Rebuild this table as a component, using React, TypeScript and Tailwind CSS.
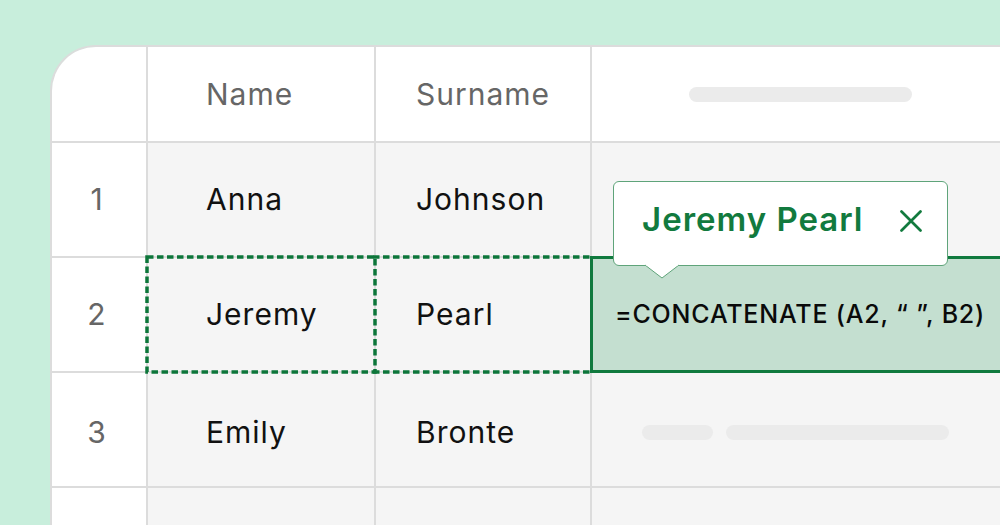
const rows = [
  { n: '1', name: 'Anna', surname: 'Johnson' },
  { n: '2', name: 'Jeremy', surname: 'Pearl' },
  { n: '3', name: 'Emily', surname: 'Bronte' },
  { n: '', name: '', surname: '' },
]

const dash = {
  fill: 'none',
  stroke: '#0d763a',
  strokeWidth: 3.5,
  strokeDasharray: '6.5 3.5',
}

// selection frame, the second cell leaves out its left edge
const DashedFrame = ({ open }: { open?: boolean }) => (
  <div className="pointer-events-none absolute -inset-[3px] z-10">
    <svg className="h-full w-full overflow-visible">
      {open ? (
        <>
          <line x1="0" y1="2" x2="100%" y2="2" {...dash} />
          <g transform="translate(0 -2)">
            <line x1="0" y1="100%" x2="100%" y2="100%" {...dash} />
          </g>
        </>
      ) : (
        <rect
          x="2"
          y="2"
          style={{ width: 'calc(100% - 4px)', height: 'calc(100% - 4px)' }}
          {...dash}
        />
      )}
    </svg>
  </div>
)

const Tooltip = () => (
  <div className="absolute left-[21px] top-[-77px] z-20 flex h-[85px] w-[335px] items-center justify-between rounded-[6px] border border-[#5fa47a] bg-white pb-[8px] pl-[28px] pr-[25px]">
    <span className="text-[33px] font-semibold tracking-[1px] text-[#127a3e]">
      Jeremy Pearl
    </span>
    <svg width="22" height="22" viewBox="0 0 22 22" className="mt-[2px]">
      <path
        d="M1.5 1.5 L20.5 20.5 M20.5 1.5 L1.5 20.5"
        stroke="#127a3e"
        strokeWidth="2.7"
        strokeLinecap="round"
      />
    </svg>
    <svg
      className="absolute left-[31px] top-[83px] overflow-visible"
      width="34"
      height="15"
    >
      <path d="M0 0 L17 13 L34 0" fill="white" stroke="#5fa47a" strokeWidth="1" />
      <rect x="1" y="-2" width="32" height="2.5" fill="white" />
    </svg>
  </div>
)

const Bar = ({ className }: { className: string }) => (
  <div className={`h-[15px] rounded-full bg-[#ebebeb] ${className}`} />
)

export default function App() {
  return (
    <div
      className="h-[525px] w-[1000px] overflow-hidden bg-[#c8eedc] pl-[50px] pt-[45px]"
      style={{ fontFamily: 'Inter, "Noto Sans", sans-serif' }}
    >
      <div className="w-[960px] overflow-hidden rounded-tl-[46px] border-l-2 border-t-2 border-[#dcdcdc]">
        <div className="grid grid-cols-[94px_226px_214px_1fr] grid-rows-[94px_113px_113px_113px_113px] gap-[2px] bg-[#dcdcdc] text-[30px] tracking-[1px]">
          {/* header */}
          <div className="bg-white" />
          <div className="flex items-center bg-white pl-[58px] text-[#666666]">
            Name
          </div>
          <div className="flex items-center bg-white pl-[40px] text-[#666666]">
            Surname
          </div>
          <div className="flex items-center bg-white pl-[97px]">
            <Bar className="w-[223px]" />
          </div>

          {rows.map((row, i) => {
            const shift = i === 2 ? 'pt-[6px]' : ''
            return (
              <div key={i} className="contents">
                <div
                  className={`flex items-center justify-center bg-white pr-[4px] text-[#666666] ${shift}`}
                >
                  {row.n}
                </div>
                <div
                  className={`relative flex items-center bg-[#f5f5f5] pl-[58px] text-[#111111] ${shift}`}
                >
                  {row.name}
                  {i === 1 && <DashedFrame />}
                </div>
                <div
                  className={`relative flex items-center bg-[#f5f5f5] pl-[40px] text-[#111111] ${shift}`}
                >
                  {row.surname}
                  {i === 1 && <DashedFrame open />}
                </div>
                {i === 1 ? (
                  <div className="relative z-10 flex items-center bg-[#c4dfd0] pl-[23px] text-[25px] font-medium tracking-[0.8px] text-[#0a0a0a] outline outline-[3px] -outline-offset-1 outline-[#107a3e]">
                    =CONCATENATE (A2, “ ”, B2)
                    <Tooltip />
                  </div>
                ) : i === 2 ? (
                  <div className="flex items-center gap-[13px] bg-[#f5f5f5] pl-[50px] pt-[6px]">
                    <Bar className="w-[71px]" />
                    <Bar className="w-[223px]" />
                  </div>
                ) : (
                  <div className="bg-[#f5f5f5]" />
                )}
              </div>
            )
          })}
        </div>
      </div>
    </div>
  )
}
